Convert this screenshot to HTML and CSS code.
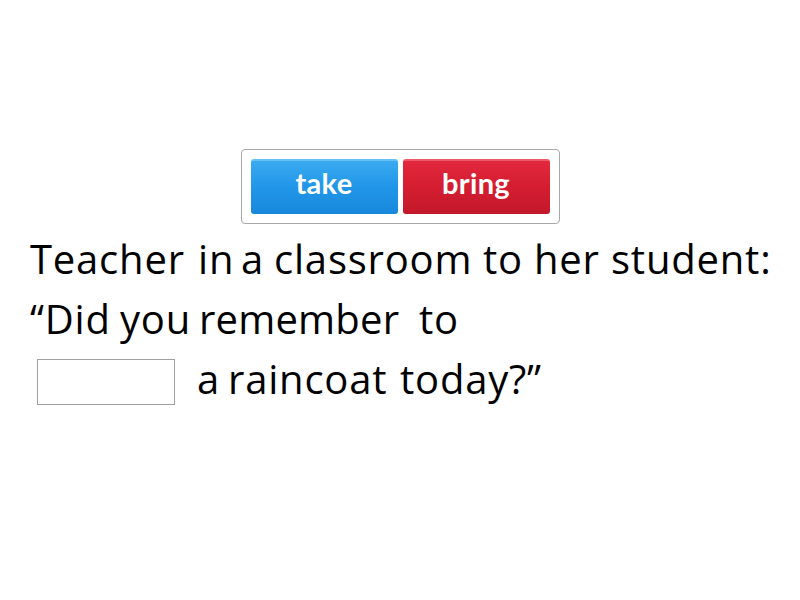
FILE: index.html
```html
<!DOCTYPE html>
<html>
<head>
<meta charset="utf-8">
<link rel="stylesheet" href="styles.css">
</head>
<body>
<div class="page">
  <div class="bank-row">
    <div class="bank">
      <div class="tile tile-blue">take</div>
      <div class="tile tile-red">bring</div>
    </div>
  </div>
  <div class="sentence">
    <div class="line">
      <span class="w w-teacher">Teacher</span><span class="w w-in">in</span><span class="w w-a1">a</span><span class="w w-classroom">classroom</span><span class="w w-to1">to</span><span class="w w-her">her</span><span class="w">student:</span>
    </div>
    <div class="line">
      <span class="w w-did">“Did</span><span class="w w-you">you</span><span class="w w-remember">remember</span><span class="w">to</span>
    </div>
    <div class="line">
      <span class="blank"></span><span class="w w-a2">a</span><span class="w w-raincoat">raincoat</span><span class="w">today?”</span>
    </div>
  </div>
</div>
</body>
</html>
```
FILE: styles.css
```css
html, body {
  margin: 0;
  padding: 0;
  background: #ffffff;
}
.page {
  width: 800px;
  height: 600px;
  padding-top: 149px;
  box-sizing: border-box;
}
.bank-row {
  display: flex;
  justify-content: center;
}
.bank {
  display: flex;
  gap: 5px;
  padding: 9px;
  border: 1px solid #a8a8a8;
  border-radius: 4px;
}
.tile {
  width: 147px;
  height: 55px;
  border-radius: 3px;
  display: flex;
  align-items: center;
  justify-content: center;
  color: #ffffff;
  font-family: Lato, "Liberation Sans", sans-serif;
  font-weight: 700;
  font-size: 29px;
  letter-spacing: 0.3px;
  box-sizing: border-box;
  padding-bottom: 10px;
}
.tile-blue {
  background: linear-gradient(#3aaaf0, #2196e8 50%, #1888dc);
  border-top: 2px solid #66c0f4;
}
.tile-red {
  background: linear-gradient(#e2283c, #d41d31 50%, #c3182a);
  border-top: 2px solid #ea5a68;
}
.sentence {
  padding-left: 30px;
  margin-top: 4px;
  font-family: "Open Sans", sans-serif;
  font-size: 40px;
  letter-spacing: 0.8px;
  color: #000000;
}
.line {
  display: flex;
  align-items: center;
  height: 60px;
  white-space: nowrap;
}
.w {
  display: inline-block;
}
.w-teacher { width: 168px; }
.w-in { width: 43px; }
.w-a1 { width: 33px; }
.w-classroom { width: 209px; }
.w-to1 { width: 51px; }
.w-her { width: 77px; }
.w-did { width: 90px; }
.w-you { width: 79px; }
.w-remember { width: 220px; letter-spacing: 0.2px; }
.w-a2 { width: 31px; }
.w-raincoat { width: 172px; }
.blank {
  width: 138px;
  height: 46px;
  box-sizing: border-box;
  border: 1px solid #a0a0a0;
  margin-left: 7px;
  margin-right: 22px;
  margin-top: 8px;
}
```
